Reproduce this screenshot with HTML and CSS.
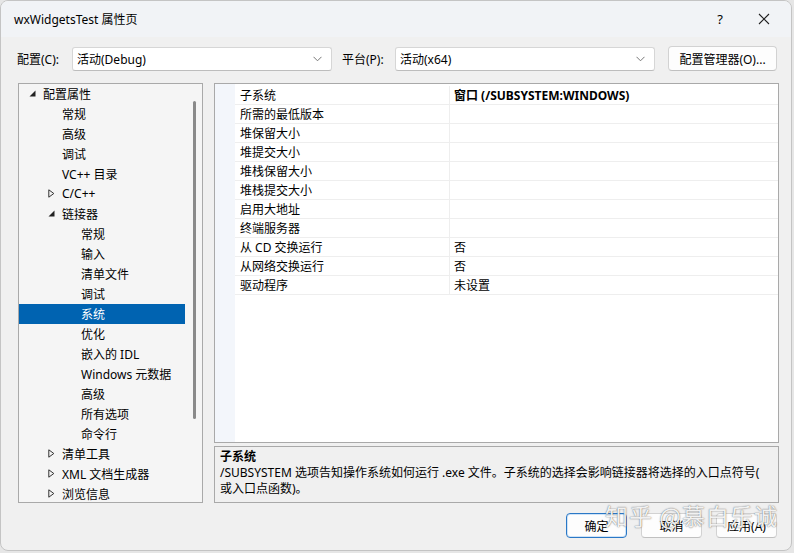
FILE: index.html
```html
<!DOCTYPE html>
<html lang="zh-CN">
<head>
<meta charset="utf-8">
<title>wxWidgetsTest 属性页</title>
<link rel="stylesheet" href="styles.css">
</head>
<body>
<div class="window">
  <div class="titlebar">
    <span class="title">wxWidgetsTest 属性页</span>
    <span class="tb-help">?</span>
    <span class="tb-close">
      <svg width="12" height="12" viewBox="0 0 12 12"><path d="M1 1L11 11M11 1L1 11" stroke="#222" stroke-width="1.1" fill="none"/></svg>
    </span>
  </div>

  <div class="toolbar">
    <span class="lbl lbl-cfg">配置(C):</span>
    <div class="combo"><span>活动(Debug)</span><svg class="chev" width="9" height="6" viewBox="0 0 9 6"><path d="M0.5 0.8L4.5 4.8L8.5 0.8" stroke="#777" stroke-width="1" fill="none"/></svg></div>
    <span class="lbl lbl-plat">平台(P):</span>
    <div class="combo"><span>活动(x64)</span><svg class="chev" width="9" height="6" viewBox="0 0 9 6"><path d="M0.5 0.8L4.5 4.8L8.5 0.8" stroke="#777" stroke-width="1" fill="none"/></svg></div>
    <button class="btn btn-mgr">配置管理器(O)...</button>
  </div>

  <div class="main">
    <div class="tree">
      <div class="tree-list">
        <div class="node l0"><span class="tg"><svg width="7" height="7" viewBox="0 0 7 7"><path d="M6.5 0.5V6.5H0.5Z" fill="#222"/></svg></span>配置属性</div>
        <div class="node l1"><span class="tg"></span>常规</div>
        <div class="node l1"><span class="tg"></span>高级</div>
        <div class="node l1"><span class="tg"></span>调试</div>
        <div class="node l1"><span class="tg"></span>VC++ 目录</div>
        <div class="node l1"><span class="tg"><svg width="7" height="9" viewBox="0 0 7 9"><path d="M0.8 0.8L5.8 4.5L0.8 8.2Z" fill="none" stroke="#333" stroke-width="1"/></svg></span>C/C++</div>
        <div class="node l1"><span class="tg"><svg width="7" height="7" viewBox="0 0 7 7"><path d="M6.5 0.5V6.5H0.5Z" fill="#222"/></svg></span>链接器</div>
        <div class="node l2"><span class="tg"></span>常规</div>
        <div class="node l2"><span class="tg"></span>输入</div>
        <div class="node l2"><span class="tg"></span>清单文件</div>
        <div class="node l2"><span class="tg"></span>调试</div>
        <div class="node l2 sel"><span class="tg"></span>系统</div>
        <div class="node l2"><span class="tg"></span>优化</div>
        <div class="node l2"><span class="tg"></span>嵌入的 IDL</div>
        <div class="node l2"><span class="tg"></span>Windows 元数据</div>
        <div class="node l2"><span class="tg"></span>高级</div>
        <div class="node l2"><span class="tg"></span>所有选项</div>
        <div class="node l2"><span class="tg"></span>命令行</div>
        <div class="node l1"><span class="tg"><svg width="7" height="9" viewBox="0 0 7 9"><path d="M0.8 0.8L5.8 4.5L0.8 8.2Z" fill="none" stroke="#333" stroke-width="1"/></svg></span>清单工具</div>
        <div class="node l1"><span class="tg"><svg width="7" height="9" viewBox="0 0 7 9"><path d="M0.8 0.8L5.8 4.5L0.8 8.2Z" fill="none" stroke="#333" stroke-width="1"/></svg></span>XML 文档生成器</div>
        <div class="node l1"><span class="tg"><svg width="7" height="9" viewBox="0 0 7 9"><path d="M0.8 0.8L5.8 4.5L0.8 8.2Z" fill="none" stroke="#333" stroke-width="1"/></svg></span>浏览信息</div>
      </div>
      <div class="vscroll"><div class="thumb"></div></div>
    </div>

    <div class="right">
      <div class="grid">
        <div class="margin"></div>
        <div class="rows">
          <div class="row"><div class="name">子系统</div><div class="val bold">窗口 (/SUBSYSTEM:WINDOWS)</div></div>
          <div class="row"><div class="name">所需的最低版本</div><div class="val"></div></div>
          <div class="row"><div class="name">堆保留大小</div><div class="val"></div></div>
          <div class="row"><div class="name">堆提交大小</div><div class="val"></div></div>
          <div class="row"><div class="name">堆栈保留大小</div><div class="val"></div></div>
          <div class="row"><div class="name">堆栈提交大小</div><div class="val"></div></div>
          <div class="row"><div class="name">启用大地址</div><div class="val"></div></div>
          <div class="row"><div class="name">终端服务器</div><div class="val"></div></div>
          <div class="row"><div class="name">从 CD 交换运行</div><div class="val">否</div></div>
          <div class="row"><div class="name">从网络交换运行</div><div class="val">否</div></div>
          <div class="row"><div class="name">驱动程序</div><div class="val">未设置</div></div>
        </div>
      </div>
      <div class="desc">
        <div class="desc-title">子系统</div>
        <div class="desc-text">/SUBSYSTEM 选项告知操作系统如何运行 .exe 文件。子系统的选择会影响链接器将选择的入口点符号(或入口点函数)。</div>
      </div>
    </div>
  </div>

  <div class="footer">
    <button class="btn btn-ok">确定</button>
    <button class="btn">取消</button>
    <button class="btn">应用(A)</button>
  </div>
  <div class="watermark">知乎 @慕白乐诚</div>
</div>
</body>
</html>
```
FILE: styles.css
```css
* { box-sizing: border-box; }
html, body { margin: 0; padding: 0; }
body {
  background: #e6e6e6;
  font-family: "Noto Sans", "Noto Sans CJK SC", sans-serif;
  font-size: 12px;
  color: #000;
}
.window {
  position: relative;
  width: 792px;
  height: 551px;
  background: #f0f0f0;
  border: 1px solid #c4c4c4;
  border-radius: 8px;
  overflow: hidden;
}
.titlebar {
  height: 36px;
  display: flex;
  align-items: center;
  padding-left: 13px;
  background: #f1f3f6;
}
.title { flex: 1; font-size: 12px; }
.tb-help { width: 14px; text-align: center; margin-right: 30px; font-size: 13px; }
.tb-close { width: 14px; display: flex; justify-content: center; margin-right: 20px; }

.toolbar {
  display: flex;
  align-items: center;
  height: 25px;
  margin-top: 9px;
  padding-left: 16px;
}
.lbl { white-space: nowrap; }
.lbl-cfg { width: 55px; }
.lbl-plat { width: 53px; margin-left: 10px; }
.combo {
  width: 260px;
  height: 24px;
  background: #fff;
  border: 1px solid #d6d6d6;
  border-bottom-color: #bdbdbd;
  border-radius: 3px;
  display: flex;
  align-items: center;
  justify-content: space-between;
  padding: 0 9px 0 4px;
}
.chev { display: block; }
.btn {
  font-family: inherit;
  font-size: 12px;
  height: 25px;
  background: #fdfdfd;
  border: 1px solid #d2d2d2;
  border-bottom-color: #c0c0c0;
  border-radius: 4px;
  color: #000;
  padding: 0;
}
.btn-mgr { width: 109px; margin-left: 13px; }

.main {
  display: flex;
  margin-top: 12px;
  padding-left: 17px;
  height: 420px;
}
.tree {
  width: 185px;
  height: 420px;
  border: 1px solid #a9a9a9;
  background: #f5f5f5;
  display: flex;
  overflow: hidden;
}
.tree-list { width: 166px; flex: none; }
.node {
  height: 20px;
  display: flex;
  align-items: center;
  white-space: nowrap;
  padding-bottom: 1px;
}
.node.l0 { padding-left: 10px; }
.node.l1 { padding-left: 29px; }
.node.l2 { padding-left: 48px; }
.tg { width: 14px; flex: none; display: flex; align-items: center; }
.tg svg { display: block; }
.node.sel { background: #0063b1; color: #fff; }
.vscroll { flex: 1; display: flex; justify-content: center; padding-top: 17px; }
.thumb { width: 3px; height: 318px; background: #8a8a8a; border-radius: 2px; margin-left: 2px; }

.right {
  margin-left: 11px;
  width: 565px;
  display: flex;
  flex-direction: column;
  gap: 3px;
}
.grid {
  height: 360px;
  border: 1px solid #a9a9a9;
  background: #fff;
  display: flex;
}
.margin { width: 20px; background: #f3f6fb; flex: none; }
.rows { flex: 1; padding-top: 2px; }
.row {
  height: 19px;
  display: flex;
  border-bottom: 1px solid #eeeeee;
}
.name {
  width: 215px;
  padding-left: 5px;
  border-right: 1px solid #eeeeee;
  display: flex;
  align-items: center;
  white-space: nowrap;
}
.val {
  flex: 1;
  padding-left: 4px;
  display: flex;
  align-items: center;
  white-space: nowrap;
}
.bold { font-weight: 700; }

.desc {
  height: 57px;
  border: 1px solid #a9a9a9;
  background: #f0f0f0;
  padding: 2px 10px 0 5px;
  line-height: 16px;
}
.desc-title { font-weight: 700; }
.desc-text { line-break: anywhere; }
.footer {
  display: flex;
  justify-content: flex-end;
  gap: 14px;
  margin-top: 10px;
  padding-right: 14px;
}
.footer .btn { width: 61px; height: 25px; }
.btn-ok { border: 1px solid #2a78c6; box-shadow: inset 0 0 0 1px #cfe3f7; }

.watermark {
  position: absolute;
  left: 604px;
  top: 497px;
  font-size: 23px;
  letter-spacing: 1px;
  color: rgba(255, 255, 255, 0.92);
  text-shadow: 0 0 1px rgba(50, 50, 50, 0.7), 0 0 2px rgba(80, 80, 80, 0.35);
  font-family: "Noto Sans CJK SC", sans-serif;
  pointer-events: none;
  white-space: nowrap;
}
```
